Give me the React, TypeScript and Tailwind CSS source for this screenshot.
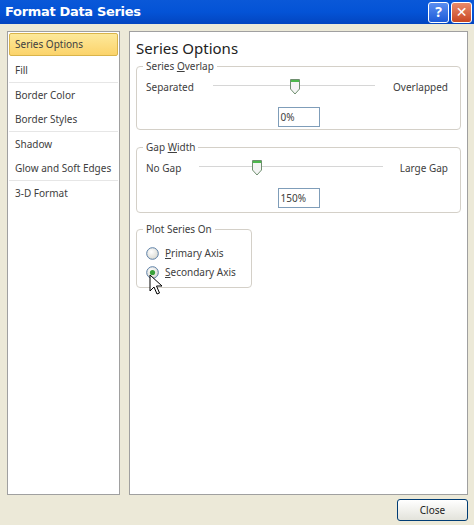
import React from 'react';

const navGroups = [
  ['Series Options', 'Fill'],
  ['Border Color', 'Border Styles'],
  ['Shadow', 'Glow and Soft Edges'],
  ['3-D Format'],
];

function Thumb() {
  return (
    <svg width="12" height="18" viewBox="0 0 12 18" className="block">
      <path d="M1.5 1.5 H10.5 V11 L6 16 L1.5 11 Z" fill="#f4f4f4" stroke="#6f8f6f" strokeWidth="1" />
      <rect x="2" y="2" width="8" height="2" fill="#4cb84c" />
    </svg>
  );
}

function Slider({ left, right, labelWidth, pos, trackWidth, value }: { left: string; right: string; labelWidth: number; pos: number; trackWidth: number; value: string }) {
  return (
    <div className="flex flex-col pt-[5px]">
      <div className="flex items-center h-[22px] pl-[9px] pr-[12px]">
        <span style={{ width: labelWidth }}>{left}</span>
        <div className="relative h-[18px]" style={{ width: trackWidth }}>
          <div className="absolute left-0 right-0 top-[7px] h-[2px] bg-[#d6d6d6] border-b border-[#ffffff]" />
          <div className="absolute top-[0px]" style={{ left: pos }}>
            <Thumb />
          </div>
        </div>
        <span className="flex-1 text-right">{right}</span>
      </div>
      <div className="flex justify-center mt-[9px]">
        <div className="w-[42px] h-[20px] border border-[#7f9db9] bg-white flex items-center pl-[2px]">{value}</div>
      </div>
    </div>
  );
}

function Radio({ checked }: { checked?: boolean }) {
  return (
    <svg width="13" height="13" viewBox="0 0 13 13">
      <defs>
        <radialGradient id={checked ? 'rg1' : 'rg0'} cx="0.4" cy="0.35" r="0.7">
          <stop offset="0" stopColor="#ffffff" />
          <stop offset="1" stopColor="#d8d8d0" />
        </radialGradient>
      </defs>
      <circle cx="6.5" cy="6.5" r="5.8" fill={`url(#${checked ? 'rg1' : 'rg0'})`} stroke="#5a7ea6" strokeWidth="1" />
      {checked && <circle cx="6.5" cy="6.5" r="2.6" fill="#3aa23a" />}
    </svg>
  );
}

function Cursor() {
  return (
    <svg width="14" height="22" viewBox="0 0 14 22" className="absolute left-[149px] top-[274px]">
      <path d="M1 1 V17 L5 13 L8 20 L10.5 19 L7.5 12 H13 Z" fill="#ffffff" stroke="#000000" strokeWidth="1" strokeLinejoin="round" />
    </svg>
  );
}

export default function App() {
  return (
    <div className="relative w-[474px] h-[525px] bg-[#ece9d8] text-[10px] text-[#404040] overflow-hidden whitespace-nowrap" style={{ fontFamily: '"Noto Sans", "DejaVu Sans", sans-serif' }}>
      {/* title bar */}
      <div className="h-[24px] flex items-center bg-gradient-to-b from-[#0a58d8] via-[#0453d6] to-[#0345c0] pl-[5px] pr-[2px]">
        <span className="flex-1 text-white font-bold text-[13px] tracking-tight" style={{ fontFamily: '"DejaVu Sans", sans-serif' }}>Format Data Series</span>
        <div className="flex gap-[2px]">
          <div className="w-[21px] h-[21px] rounded-[3px] border border-white bg-gradient-to-b from-[#5a8ef0] to-[#1c5ad8] text-white font-bold text-[14px] flex items-center justify-center leading-none">?</div>
          <div className="w-[21px] h-[21px] rounded-[3px] border border-white bg-gradient-to-b from-[#e88a6a] to-[#c84520] text-white font-bold text-[14px] flex items-center justify-center leading-none">✕</div>
        </div>
      </div>

      <div className="flex gap-[9px] pl-[7px] pr-[6px] pt-[7px]">
        {/* category list */}
        <div className="w-[113px] h-[464px] bg-white border border-[#a0a0a0] p-[1px] flex flex-col">
          {navGroups.map((group, gi) => (
            <div key={gi} className={gi < navGroups.length - 1 ? 'border-b border-[#e6e6e6]' : ''}>
              {group.map((item) => (
                <div
                  key={item}
                  className={
                    item === 'Series Options'
                      ? 'h-[23px] mb-[2px] flex items-center pl-[5px] rounded-[2px] border border-[#d9b44a] bg-gradient-to-b from-[#fde99a] to-[#fbd36a]'
                      : 'h-[24px] flex items-center pl-[6px]'
                  }
                >
                  {item}
                </div>
              ))}
            </div>
          ))}
        </div>

        {/* options pane */}
        <div className="flex-1 h-[464px] bg-white border border-[#a0a0a0] px-[6px] pt-[5px]">
          <div className="text-[15px] text-[#222] leading-[22px] mb-[2px]">Series Options</div>

          <fieldset className="border border-[#d4d0c8] rounded-[4px] h-[69px] px-0 pb-0">
            <legend className="ml-[6px] px-[3px] leading-[10px]">
              Series <span className="underline">O</span>verlap
            </legend>
            <Slider left="Separated" right="Overlapped" labelWidth={67} pos={76} trackWidth={162} value="0%" />
          </fieldset>

          <fieldset className="border border-[#d4d0c8] rounded-[4px] h-[71px] mt-[12px] px-0 pb-0">
            <legend className="ml-[6px] px-[3px] leading-[10px]">
              Gap <span className="underline">W</span>idth
            </legend>
            <Slider left="No Gap" right="Large Gap" labelWidth={53} pos={52} trackWidth={184} value="150%" />
          </fieldset>

          <fieldset className="border border-[#d4d0c8] rounded-[4px] w-[116px] h-[64px] mt-[11px] px-[9px] pb-0">
            <legend className="ml-[-3px] px-[3px] leading-[10px]">Plot Series On</legend>
            <div className="flex items-center gap-[6px] h-[19px] mt-[10px]">
              <Radio />
              <span>
                <span className="underline">P</span>rimary Axis
              </span>
            </div>
            <div className="flex items-center gap-[6px] h-[19px]">
              <Radio checked />
              <span>
                <span className="underline">S</span>econdary Axis
              </span>
            </div>
          </fieldset>
        </div>
      </div>

      <div className="flex justify-end pr-[6px] pt-[4px]">
        <div className="w-[71px] h-[22px] rounded-[3px] border border-[#003c74] bg-gradient-to-b from-[#ffffff] to-[#e3e3db] flex items-center justify-center text-[#222]">Close</div>
      </div>

      <Cursor />
    </div>
  );
}
